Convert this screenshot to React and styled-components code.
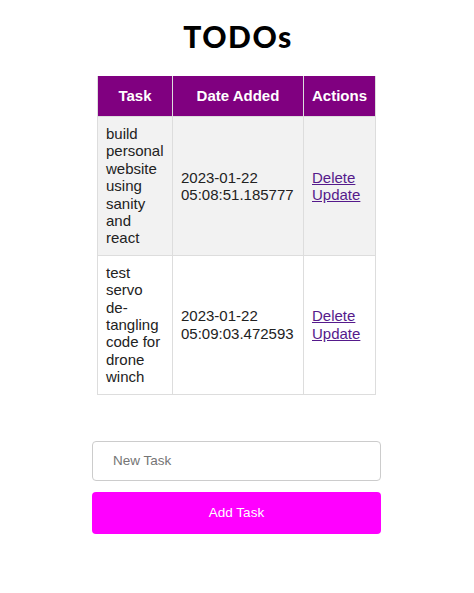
import React from "react";
import styled, { createGlobalStyle } from "styled-components";

const GlobalStyle = createGlobalStyle`
    body {
        margin: 0;
        background: #ffffff;
        font-family: "Liberation Sans", Arial, sans-serif;
        color: #222222;
    }
`;

const Page = styled.div`
    display: flex;
    flex-direction: column;
    align-items: center;
    padding-top: 21px;
`;

const Title = styled.h1`
    margin: 0 0 25px;
    font-family: Lato, "Noto Sans", sans-serif;
    font-weight: 900;
    font-size: 30px;
    line-height: 1;
    letter-spacing: 1.5px;
    color: #000000;
    padding-left: 2px;
`;

const Table = styled.table`
    border-collapse: collapse;
    table-layout: fixed;
    width: 278px;
    margin-left: -1px;
    font-size: 15px;
    line-height: 17.4px;
`;

const Th = styled.th`
    background: #800080;
    color: #ffffff;
    font-size: 15px;
    font-weight: bold;
    padding: 11px 0;
    line-height: 18px;
    border: 1px solid #dddddd;
    border-top: none;
    text-align: center;
`;

const Row = styled.tr`
    background: ${(p) => (p.$shade ? "#f2f2f2" : "#ffffff")};
`;

const Td = styled.td`
    border: 1px solid #dddddd;
    padding: 8px;
    vertical-align: middle;
    text-align: left;
    white-space: ${(p) => (p.$nowrap ? "nowrap" : "normal")};
`;

const ActionLink = styled.a`
    display: block;
    color: #551a8b;
    text-decoration: underline;
    cursor: pointer;
`;

const Form = styled.div`
    display: flex;
    flex-direction: column;
    gap: 11px;
    width: 289px;
    margin-top: 46px;
    margin-left: -1px;
`;

const Input = styled.input`
    box-sizing: border-box;
    height: 40px;
    width: 100%;
    padding: 0 20px;
    border: 1px solid #cccccc;
    border-radius: 4px;
    font-family: "Liberation Sans", Arial, sans-serif;
    font-size: 13.5px;
    outline: none;

    &::placeholder {
        color: #757575;
    }
`;

const Button = styled.button`
    height: 42px;
    width: 100%;
    border: none;
    border-radius: 4px;
    background: #ff00ff;
    color: #ffffff;
    font-family: "Liberation Sans", Arial, sans-serif;
    font-size: 13.5px;
    cursor: pointer;
`;

const todos = [
    { task: "build personal website using sanity and react", date: "2023-01-22 05:08:51.185777" },
    { task: "test servo de-tangling code for drone winch", date: "2023-01-22 05:09:03.472593" },
];

const App = () => {
    return (
        <>
            <GlobalStyle />
            <Page>
                <Title>TODOs</Title>
                <Table>
                    <colgroup>
                        <col style={{ width: "75px" }} />
                        <col style={{ width: "131px" }} />
                        <col style={{ width: "72px" }} />
                    </colgroup>
                    <thead>
                        <tr>
                            <Th>Task</Th>
                            <Th>Date Added</Th>
                            <Th>Actions</Th>
                        </tr>
                    </thead>
                    <tbody>
                        {todos.map((t, i) => (
                            <Row key={t.date} $shade={i % 2 === 0}>
                                <Td>{t.task}</Td>
                                <Td $nowrap>
                                    {t.date.split(" ")[0]}
                                    <br />
                                    {t.date.split(" ")[1]}
                                </Td>
                                <Td>
                                    <ActionLink href="#">Delete</ActionLink>
                                    <ActionLink href="#">Update</ActionLink>
                                </Td>
                            </Row>
                        ))}
                    </tbody>
                </Table>
                <Form>
                    <Input placeholder="New Task" />
                    <Button>Add Task</Button>
                </Form>
            </Page>
        </>
    );
};

export default App;
